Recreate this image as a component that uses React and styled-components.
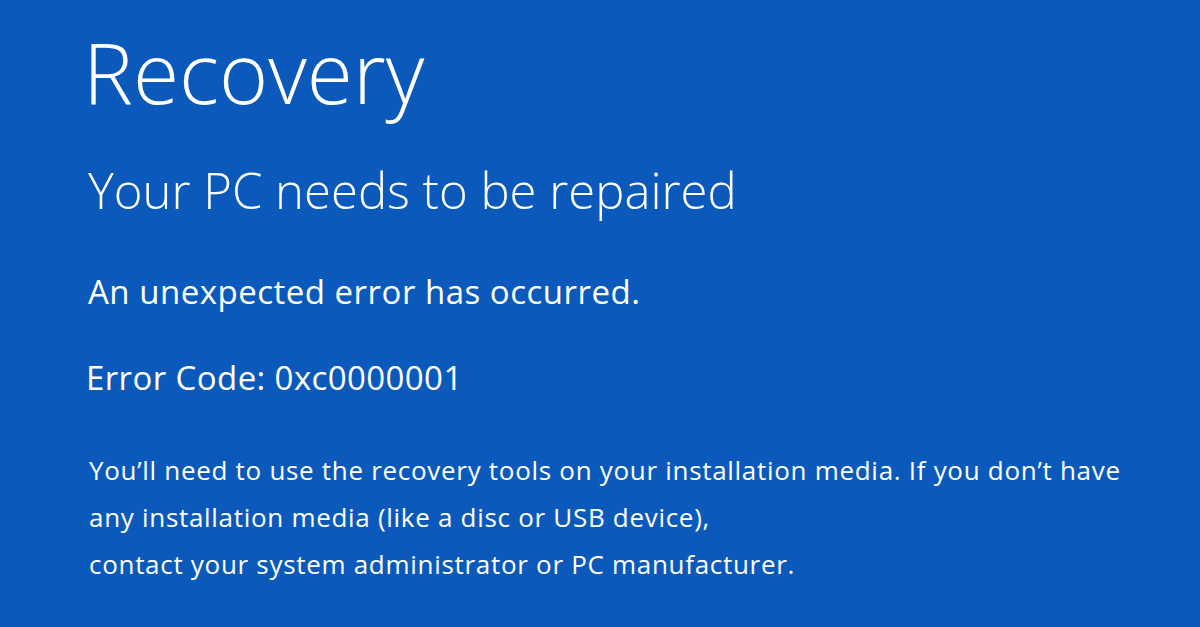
import styled, { createGlobalStyle } from "styled-components";

const GlobalStyle = createGlobalStyle`
  html, body {
    margin: 0;
    padding: 0;
    background: #0b5abb;
  }
`;

const Screen = styled.div`
  width: 1200px;
  height: 627px;
  overflow: hidden;
  box-sizing: border-box;
  background: #0b5abb;
  color: #ffffff;
  font-family: "Open Sans", "Noto Sans", sans-serif;
  padding: 30px 0 0 83px;
`;

const Title = styled.h1`
  margin: 0;
  font-size: 84px;
  line-height: 84px;
  font-weight: 300;
`;

const Subtitle = styled.h2`
  margin: 52px 0 0 5px;
  font-size: 49px;
  line-height: 49px;
  font-weight: 300;
`;

const Message = styled.p`
  margin: ${(p) => p.$top}px 0 0 ${(p) => p.$left || 5}px;
  font-size: ${(p) => p.$size}px;
  line-height: ${(p) => p.$size}px;
  letter-spacing: ${(p) => p.$spacing || 0}px;
  font-weight: 400;
`;

const Details = styled.p`
  margin: 53px 0 0 6px;
  font-size: 26px;
  line-height: 47px;
  letter-spacing: 0.7px;
  font-weight: 400;
  white-space: nowrap;
`;

export default function App() {
  return (
    <>
      <GlobalStyle />
      <Screen>
        <Title>Recovery</Title>
        <Subtitle>Your PC needs to be repaired</Subtitle>
        <Message $top={60} $size={33} $spacing={0.5}>
          An unexpected error has occurred.
        </Message>
        <Message $top={53} $size={33} $spacing={0.4} $left={3}>
          Error Code: 0xc0000001
        </Message>
        <Details>
          You’ll need to use the recovery tools on your installation media. If you don’t have
          <br />
          any installation media (like a disc or USB device),
          <br />
          contact your system administrator or PC manufacturer.
        </Details>
      </Screen>
    </>
  );
}
